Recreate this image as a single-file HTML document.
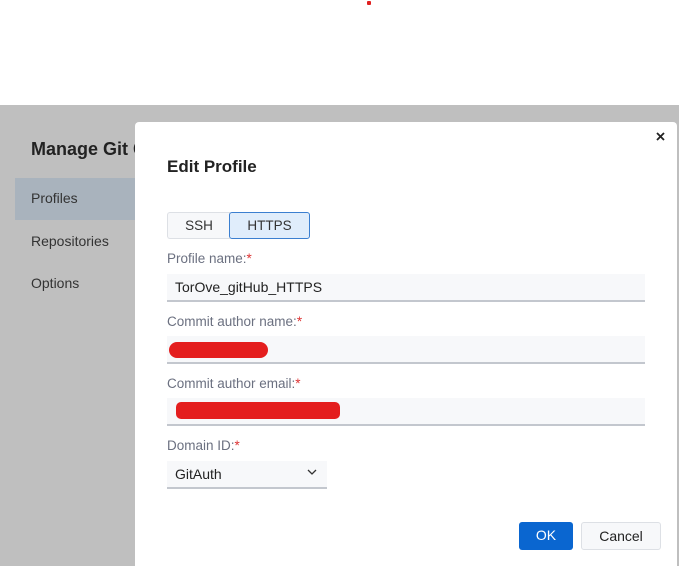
<!DOCTYPE html>
<html><head><meta charset="utf-8"><style>
*{box-sizing:border-box;margin:0;padding:0}
body{width:679px;height:566px;overflow:hidden;background:#fff;font-family:"Liberation Sans","DejaVu Sans",sans-serif;position:relative}
.dot{position:absolute;left:367px;top:1px;width:4px;height:4px;background:#e02020;border-radius:1px}
.bd{position:absolute;left:0;top:105px;width:679px;height:461px;background:#bfbfbf}
.mg{position:absolute;left:31px;top:139px;font-size:18px;font-weight:bold;color:#222}
.sel{position:absolute;left:15px;top:178px;width:125px;height:42px;background:#a9b3bd}
.nav{position:absolute;left:31px;font-size:14px;color:#333}
.dlg{position:absolute;left:135px;top:122px;width:542px;height:444px;background:#fff;border-radius:4px 4px 0 0}
.t{position:absolute;left:167px;top:157px;font-size:17px;font-weight:bold;color:#222}
.tog{position:absolute;top:212px;height:27px;font-size:13.5px;color:#333;text-align:center;line-height:25px}
.lbl{position:absolute;left:167px;font-size:13.5px;color:#6b7080}
.lbl b{color:#d33;font-weight:normal}
.inp{position:absolute;left:167px;width:478px;height:28px;background:#f7f8fa;border-bottom:2px solid #c3c7ce;font-size:14px;color:#222;padding:5px 8px}
.red{position:absolute;background:#e41e1e;border-radius:8px}
.btn{position:absolute;top:522px;height:28px;font-size:14px;text-align:center;line-height:27px;border-radius:3px}
</style></head><body>
<div class="dot"></div>
<div class="bd"></div>
<div class="mg">Manage Git Cr</div>
<div class="sel"></div>
<div class="nav" style="top:190px">Profiles</div>
<div class="nav" style="top:233px">Repositories</div>
<div class="nav" style="top:275px">Options</div>
<div class="dlg"></div>
<svg style="position:absolute;left:656px;top:132px" width="9" height="9" viewBox="0 0 9 9"><path d="M1 1L8 8M8 1L1 8" stroke="#222" stroke-width="1.8"/></svg>
<div class="t">Edit Profile</div>
<div class="tog" style="left:167px;width:63px;background:#f7f8fa;border:1px solid #dde0e5;border-right:none;border-radius:3px 0 0 3px">SSH</div>
<div class="tog" style="left:229px;width:81px;background:#e0edfb;border:1px solid #3b7fd0;border-radius:3px">HTTPS</div>
<div class="lbl" style="top:251px">Profile name:<b>*</b></div>
<div class="inp" style="top:274px">TorOve_gitHub_HTTPS</div>
<div class="lbl" style="top:314px">Commit author name:<b>*</b></div>
<div class="inp" style="top:336px"></div>
<div class="red" style="left:169px;top:342px;width:99px;height:16px"></div>
<div class="lbl" style="top:376px">Commit author email:<b>*</b></div>
<div class="inp" style="top:398px"></div>
<div class="red" style="left:176px;top:402px;width:164px;height:17px;border-radius:5px"></div>
<div class="lbl" style="top:438px">Domain ID:<b>*</b></div>
<div class="inp" style="top:461px;width:160px">GitAuth</div>
<svg style="position:absolute;left:307px;top:469px" width="10" height="7" viewBox="0 0 10 7"><path d="M1 1L5 5L9 1" stroke="#333" stroke-width="1.3" fill="none"/></svg>
<div class="btn" style="left:519px;width:54px;background:#0a66d0;color:#fff">OK</div>
<div class="btn" style="left:581px;width:80px;background:#f7f8fa;border:1px solid #dde0e5;color:#222">Cancel</div>
</body></html>
